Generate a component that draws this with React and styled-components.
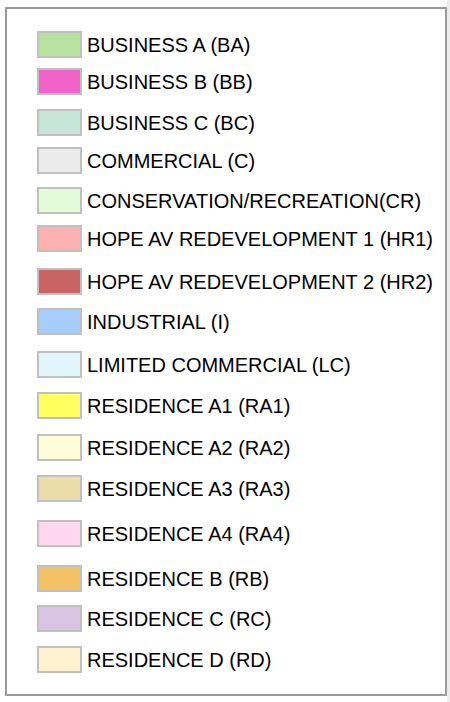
import React from "react";
import styled, { createGlobalStyle } from "styled-components";

const zones = [
  { label: "BUSINESS A (BA)", color: "#b8e2a0", space: 0 },
  { label: "BUSINESS B (BB)", color: "#f062c8", space: 10 },
  { label: "BUSINESS C (BC)", color: "#c6e6da", space: 14 },
  { label: "COMMERCIAL (C)", color: "#ebebeb", space: 11 },
  { label: "CONSERVATION/RECREATION(CR)", color: "#e2fcd8", space: 13 },
  { label: "HOPE AV REDEVELOPMENT 1 (HR1)", color: "#ffb0b0", space: 11 },
  { label: "HOPE AV REDEVELOPMENT 2 (HR2)", color: "#c86464", space: 16 },
  { label: "INDUSTRIAL (I)", color: "#a8ccfc", space: 13 },
  { label: "LIMITED COMMERCIAL (LC)", color: "#e0f6fa", space: 16 },
  { label: "RESIDENCE A1 (RA1)", color: "#ffff60", space: 14 },
  { label: "RESIDENCE A2 (RA2)", color: "#fffcd8", space: 15 },
  { label: "RESIDENCE A3 (RA3)", color: "#ecdcaa", space: 14 },
  { label: "RESIDENCE A4 (RA4)", color: "#ffd8f0", space: 18 },
  { label: "RESIDENCE B (RB)", color: "#f2c264", space: 18 },
  { label: "RESIDENCE C (RC)", color: "#dac4e6", space: 13 },
  { label: "RESIDENCE D (RD)", color: "#fff2d0", space: 14 },
];

const App = () => {
  return (
    <>
      <GlobalStyle />
      <Page>
        <Legend>
          {zones.map((zone) => (
            <Row key={zone.label} $space={zone.space}>
              <Swatch $color={zone.color} />
              <Label>{zone.label}</Label>
            </Row>
          ))}
        </Legend>
        <EdgeStrip />
      </Page>
    </>
  );
};

const GlobalStyle = createGlobalStyle`
  html, body {
    margin: 0;
    padding: 0;
    background: #ffffff;
  }
  body {
    font-family: "Liberation Sans", Arial, sans-serif;
  }
`;

const Page = styled.div`
  display: flex;
  align-items: flex-start;
  width: 450px;
  height: 702px;
`;

const Legend = styled.div`
  box-sizing: border-box;
  width: 442px;
  height: 689px;
  margin: 7px 0 0 5px;
  padding: 22px 0 0 30px;
  border: 2px solid #9a9a9a;
  display: flex;
  flex-direction: column;
`;

const EdgeStrip = styled.div`
  width: 3px;
  height: 702px;
  background: #ececec;
`;

const Row = styled.div`
  display: flex;
  align-items: center;
  gap: 5px;
  height: 27px;
  margin-top: ${(p) => p.$space}px;
`;

const Swatch = styled.div`
  box-sizing: border-box;
  flex: none;
  width: 45px;
  height: 27px;
  border: 2px solid #c0c0c0;
  background: ${(p) => p.$color};
`;

const Label = styled.span`
  font-size: 20px;
  line-height: 27px;
  color: #000000;
  white-space: nowrap;
  padding-top: 1px;
`;

export default App;
